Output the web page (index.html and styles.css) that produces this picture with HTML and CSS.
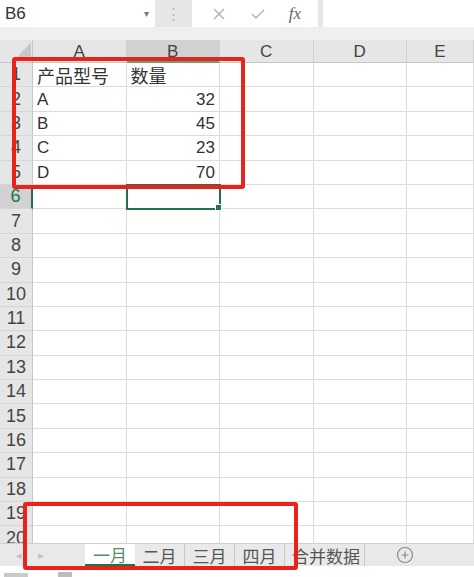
FILE: index.html
```html
<!DOCTYPE html>
<html lang="zh">
<head>
<meta charset="utf-8">
<link rel="stylesheet" href="styles.css">
</head>
<body>
<div class="app">
  <div class="fbar">
    <div class="namebox"><span>B6</span><span class="dd">▾</span></div>
    <div class="grip">⋮</div>
    <div class="fbtns">
      <svg class="ic" width="16" height="16" viewBox="0 0 16 16"><path d="M3 3 L13 13 M13 3 L3 13" stroke="#b0b0b0" stroke-width="1.4" fill="none"/></svg>
      <svg class="ic" width="18" height="16" viewBox="0 0 18 16"><path d="M3 8 L7 12 L15 4" stroke="#b0b0b0" stroke-width="1.4" fill="none"/></svg>
      <span class="fx">fx</span>
    </div>
    <div class="finput"></div>
  </div>
  <div class="band"></div>
  <div class="sheet">
    <div class="grid">
      <div class="corner"><svg width="20" height="22" viewBox="0 0 20 22"><path d="M19 2 L19 21 L2 21 Z" fill="#c8c8c8"/></svg></div>
      <div class="ch">A</div><div class="ch sel">B</div><div class="ch">C</div><div class="ch">D</div><div class="ch">E</div>

      <div class="rh">1</div><div class="c cjk">产品型号</div><div class="c cjk">数量</div><div class="c"></div><div class="c"></div><div class="c"></div>
      <div class="rh">2</div><div class="c">A</div><div class="c n">32</div><div class="c"></div><div class="c"></div><div class="c"></div>
      <div class="rh">3</div><div class="c">B</div><div class="c n">45</div><div class="c"></div><div class="c"></div><div class="c"></div>
      <div class="rh">4</div><div class="c">C</div><div class="c n">23</div><div class="c"></div><div class="c"></div><div class="c"></div>
      <div class="rh">5</div><div class="c">D</div><div class="c n">70</div><div class="c"></div><div class="c"></div><div class="c"></div>
      <div class="rh rsel">6</div><div class="c"></div><div class="c active"></div><div class="c"></div><div class="c"></div><div class="c"></div>
      <div class="rh">7</div><div class="c"></div><div class="c"></div><div class="c"></div><div class="c"></div><div class="c"></div>
      <div class="rh">8</div><div class="c"></div><div class="c"></div><div class="c"></div><div class="c"></div><div class="c"></div>
      <div class="rh">9</div><div class="c"></div><div class="c"></div><div class="c"></div><div class="c"></div><div class="c"></div>
      <div class="rh">10</div><div class="c"></div><div class="c"></div><div class="c"></div><div class="c"></div><div class="c"></div>
      <div class="rh">11</div><div class="c"></div><div class="c"></div><div class="c"></div><div class="c"></div><div class="c"></div>
      <div class="rh">12</div><div class="c"></div><div class="c"></div><div class="c"></div><div class="c"></div><div class="c"></div>
      <div class="rh">13</div><div class="c"></div><div class="c"></div><div class="c"></div><div class="c"></div><div class="c"></div>
      <div class="rh">14</div><div class="c"></div><div class="c"></div><div class="c"></div><div class="c"></div><div class="c"></div>
      <div class="rh">15</div><div class="c"></div><div class="c"></div><div class="c"></div><div class="c"></div><div class="c"></div>
      <div class="rh">16</div><div class="c"></div><div class="c"></div><div class="c"></div><div class="c"></div><div class="c"></div>
      <div class="rh">17</div><div class="c"></div><div class="c"></div><div class="c"></div><div class="c"></div><div class="c"></div>
      <div class="rh">18</div><div class="c"></div><div class="c"></div><div class="c"></div><div class="c"></div><div class="c"></div>
      <div class="rh">19</div><div class="c"></div><div class="c"></div><div class="c"></div><div class="c"></div><div class="c"></div>
      <div class="rh">20</div><div class="c"></div><div class="c"></div><div class="c"></div><div class="c"></div><div class="c"></div>
    </div>
  </div>
  <div class="tabbar">
    <div class="nav"><span>◂</span><span>▸</span></div>
    <div class="tab on">一月</div>
    <div class="tab">二月</div>
    <div class="tab">三月</div>
    <div class="tab">四月</div>
    <div class="tab wide">合并数据</div>
    <div class="add"><svg width="18" height="18" viewBox="0 0 18 18"><circle cx="9" cy="9" r="7.5" stroke="#8a8a8a" stroke-width="1.2" fill="none"/><path d="M9 5.5 V12.5 M5.5 9 H12.5" stroke="#8a8a8a" stroke-width="1.2"/></svg></div>
  </div>
  <div class="status"><span class="st1"></span><span class="st2"></span></div>
  <div class="mark m1"></div>
  <div class="mark m2"></div>
</div>
</body>
</html>
```
FILE: styles.css
```css
* { box-sizing: border-box; }
html, body { margin: 0; padding: 0; }
body {
  width: 474px;
  height: 577px;
  overflow: hidden;
  background: #efefef;
  font-family: "Liberation Sans", "Noto Sans CJK SC", sans-serif;
  color: #333;
}
.app { position: relative; width: 474px; height: 577px; display: flex; flex-direction: column; }

.fbar { height: 27px; display: flex; background: #e6e6e6; }
.namebox {
  width: 155px; background: #fff; display: flex; align-items: center;
  justify-content: space-between; padding: 0 6px 0 5px; font-size: 17px; color: #333;
}
.namebox .dd { font-size: 10px; color: #777; }
.grip { width: 37px; display: flex; align-items: center; justify-content: center; color: #b8b8b8; font-size: 15px; }
.fbtns {
  width: 126px; background: #fff; display: flex; align-items: center;
  justify-content: space-around; padding: 0 6px 0 8px;
}
.fx { font-family: "Liberation Serif", serif; font-style: italic; font-size: 17px; color: #666; }
.finput { flex: 1; margin-left: 5px; background: #fff; }

.band { height: 13px; background: #efefef; }

.sheet { height: 503px; overflow: hidden; background: #fff; }
.grid {
  display: grid;
  grid-template-columns: 33px 93.5px 93.5px 93.5px 93.5px 1fr;
  grid-template-rows: 23px repeat(20, 24.4px);
}
.corner { background: #e6e6e6; border-right: 1px solid #c6c6c6; border-bottom: 1px solid #c6c6c6; display: flex; align-items: flex-end; justify-content: flex-end; }
.ch {
  background: #e6e6e6; border-right: 1px solid #d0d0d0; border-bottom: 1px solid #c6c6c6;
  display: flex; align-items: center; justify-content: center;
  font-size: 17px; color: #444; padding-top: 2px;
}
.ch.sel { background: #d2d2d2; border-bottom: 2px solid #6a9c7e; }
.rh {
  background: #e6e6e6; border-right: 1px solid #c6c6c6; border-bottom: 1px solid #d6d6d6;
  display: flex; align-items: center; justify-content: center;
  font-size: 18px; color: #444; white-space: nowrap;
}
.rh.rsel { background: #d2d2d2; color: #217346; border-right: 2px solid #217346; }
.c {
  border-right: 1px solid #dcdcdc; border-bottom: 1px solid #dcdcdc;
  display: flex; align-items: center; padding: 1px 4px 0 4px;
  font-size: 17px; color: #333; white-space: nowrap;
}
.c.cjk { font-size: 18px; }
.c.n { justify-content: flex-end; }
.c.active { position: relative; outline: 2px solid #217346; outline-offset: -1px; }
.c.active::after {
  content: ""; position: absolute; right: -3px; bottom: -3px;
  width: 5px; height: 5px; background: #217346; border: 1px solid #fff;
}

.tabbar { height: 23px; display: flex; background: #e9e9e9; border-top: 1px solid #d0d0d0; }
.nav { width: 85px; display: flex; align-items: center; gap: 16px; padding-left: 16px; color: #c0c0c0; font-size: 11px; }
.tab {
  width: 50px; display: flex; align-items: center; justify-content: center;
  font-size: 17px; color: #555; border-right: 1px solid #c8c8c8;
}
.tab.on { background: #fff; color: #5a8a6c; border-bottom: 2px solid #217346; border-right: none; }
.tab.wide { width: 80px; justify-content: flex-start; padding-left: 7px; }
.add { width: 80px; display: flex; align-items: center; justify-content: center; }

.status { flex: 1; background: #fff; position: relative; display: flex; align-items: flex-end; gap: 30px; padding-left: 4px; }
.st1 { width: 24px; height: 4px; background: #c9c9c9; }
.st2 { width: 14px; height: 5px; background: #bdbdbd; }

.mark { position: absolute; border: 4px solid #e8231c; border-radius: 3px; }
.m1 { left: 12px; top: 57px; width: 233px; height: 132px; }
.m2 { left: 23px; top: 502px; width: 275px; height: 68px; }
```
